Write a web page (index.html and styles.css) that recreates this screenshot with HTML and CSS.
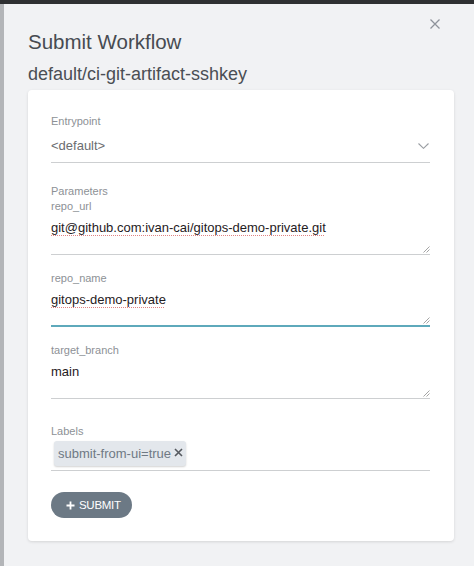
FILE: index.html
```html
<!DOCTYPE html>
<html>
<head>
<meta charset="utf-8">
<link rel="stylesheet" href="styles.css">
</head>
<body>
<div class="topbar"></div>
<div class="frame">
  <div class="backdrop"></div>
  <div class="panel">
    <button class="close" aria-label="Close">
      <svg width="10" height="10" viewBox="0 0 10 10"><path d="M0.5 0.5L9.5 9.5M9.5 0.5L0.5 9.5" stroke="#8e939b" stroke-width="1.3" fill="none"/></svg>
    </button>
    <h1 class="title">Submit Workflow</h1>
    <h2 class="subtitle">default/ci-git-artifact-sshkey</h2>
    <div class="card">
      <div class="label">Entrypoint</div>
      <div class="select">
        <span class="select-value">&lt;default&gt;</span>
        <svg class="chev" width="11" height="6" viewBox="0 0 11 6"><path d="M0.5 0.5L5.5 5.3L10.5 0.5" stroke="#9a9ea3" stroke-width="1.1" fill="none"/></svg>
      </div>

      <div class="params">
        <div class="label group-label">Parameters</div>
        <div class="label">repo_url</div>
        <div class="ta">
          <span class="spell">git@github.com:ivan-cai/gitops-demo-private.git</span>
          <svg class="grip" width="7" height="7" viewBox="0 0 7 7"><path d="M6.5 0.5L0.5 6.5M6.5 3.5L3.5 6.5" stroke="#9a9a9a" stroke-width="0.9" fill="none"/></svg>
        </div>

        <div class="field">
          <div class="label">repo_name</div>
          <div class="ta focused">
            <span class="spell">gitops-demo-private</span>
            <svg class="grip" width="7" height="7" viewBox="0 0 7 7"><path d="M6.5 0.5L0.5 6.5M6.5 3.5L3.5 6.5" stroke="#9a9a9a" stroke-width="0.9" fill="none"/></svg>
          </div>
        </div>

        <div class="field">
          <div class="label">target_branch</div>
          <div class="ta">
            <span>main</span>
            <svg class="grip" width="7" height="7" viewBox="0 0 7 7"><path d="M6.5 0.5L0.5 6.5M6.5 3.5L3.5 6.5" stroke="#9a9a9a" stroke-width="0.9" fill="none"/></svg>
          </div>
        </div>
      </div>

      <div class="labels">
        <div class="label">Labels</div>
        <div class="chips">
          <span class="chip">submit-from-ui=true<svg class="chip-x" width="9" height="9" viewBox="0 0 9 9"><path d="M1 1L8 8M8 1L1 8" stroke="#55595f" stroke-width="1.6" fill="none"/></svg></span>
        </div>
      </div>

      <button class="submit"><svg width="9" height="9" viewBox="0 0 9 9"><path d="M4.5 0.5V8.5M0.5 4.5H8.5" stroke="#ffffff" stroke-width="1.8" fill="none"/></svg><span>SUBMIT</span></button>
    </div>
  </div>
</div>
</body>
</html>
```

FILE: styles.css
```css
html, body {
  margin: 0;
  padding: 0;
  height: 100%;
  overflow: hidden;
}
body {
  font-family: "Liberation Sans", Arial, sans-serif;
  background: #f1f2f4;
}
.topbar {
  height: 4px;
  background: #2f3032;
}
.frame {
  display: flex;
  height: 562px;
}
.backdrop {
  width: 4px;
  flex: none;
  background: #b3b5b8;
  box-shadow: 1px 0 1px rgba(0,0,0,0.08);
}
.panel {
  position: relative;
  flex: 1;
  padding: 26px 0 0 24px;
  background: #f1f2f4;
}
.close {
  position: absolute;
  top: 15px;
  right: 34px;
  width: 10px;
  height: 10px;
  padding: 0;
  border: none;
  background: none;
  display: flex;
}
.title {
  margin: 0;
  font-size: 20.5px;
  line-height: 24px;
  font-weight: normal;
  color: #474b51;
}
.subtitle {
  margin: 9px 0 0;
  font-size: 18px;
  line-height: 22px;
  font-weight: normal;
  color: #4a4e54;
}
.card {
  margin-top: 5px;
  width: 426px;
  box-sizing: border-box;
  padding: 24px 24px 23px 23px;
  background: #ffffff;
  border-radius: 4px;
  box-shadow: 0 1px 3px rgba(0,0,0,0.12);
}
.label {
  font-size: 11px;
  line-height: 14px;
  color: #8d9196;
}
.group-label {
  line-height: 15px;
}
.select {
  display: flex;
  align-items: center;
  justify-content: space-between;
  padding: 9px 0 7px;
  border-bottom: 1px solid #cdcfd1;
}
.select-value {
  font-size: 13px;
  line-height: 18px;
  color: #6b6d70;
}
.chev {
  margin-right: 1px;
}
.params {
  margin-top: 21px;
}
.ta {
  position: relative;
  padding: 6px 0 17px;
  font-size: 13px;
  line-height: 18px;
  color: #1f2023;
  border-bottom: 1px solid #cdcfd1;
}
.ta.focused {
  padding-bottom: 16px;
  border-bottom: 2px solid #5ea9bb;
}
.spell {
  text-decoration: underline dotted rgba(214, 90, 90, 0.75);
  text-decoration-thickness: 1px;
  text-underline-offset: 3px;
}
.grip {
  position: absolute;
  right: 0;
  bottom: 1px;
}
.field {
  margin-top: 16px;
}
.labels {
  margin-top: 25px;
}
.chips {
  display: flex;
  padding: 3px 0 4px 3px;
  border-bottom: 1px solid #cdcfd1;
}
.chip {
  display: inline-flex;
  align-items: center;
  height: 25px;
  padding: 0 3px 0 4px;
  gap: 3px;
  box-sizing: border-box;
  background: #e3e7ec;
  border-radius: 3px;
  box-shadow: 0 1px 2px rgba(0,0,0,0.18);
  font-size: 13px;
  color: #6f7984;
}
.chip-x {
  margin-top: -3px;
}
.submit {
  margin-top: 21px;
  display: flex;
  align-items: center;
  gap: 4px;
  height: 26px;
  width: 81px;
  padding: 0 0 0 15px;
  border: none;
  border-radius: 13px;
  background: #6c7985;
  color: #ffffff;
  font-family: "Liberation Sans", Arial, sans-serif;
  font-size: 11.5px;
  letter-spacing: -0.3px;
}
```
